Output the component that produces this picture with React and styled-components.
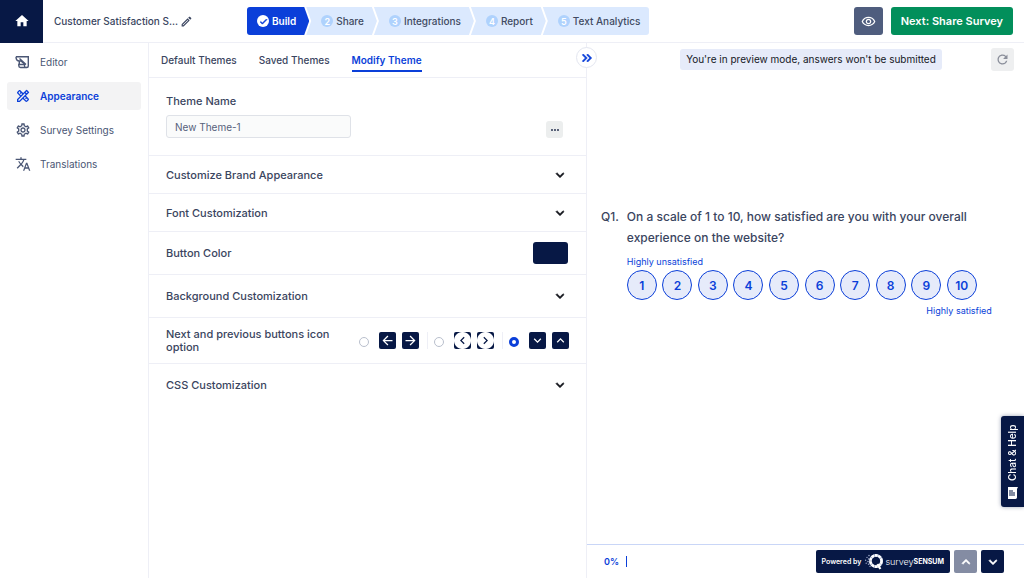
import React, { useState } from 'react'
import styled, { createGlobalStyle } from 'styled-components';
import {
    MdHome,
    MdOutlineEdit,
    MdOutlineDesignServices,
    MdOutlineSettings,
    MdTranslate,
    MdOutlineRemoveRedEye,
    MdRefresh,
    MdMoreHoriz,
    MdKeyboardArrowDown,
    MdKeyboardArrowUp,
    MdKeyboardArrowLeft,
    MdKeyboardArrowRight,
    MdArrowBack,
    MdArrowForward,
    MdKeyboardDoubleArrowRight,
    MdCheck,
} from 'react-icons/md';

const navy = '#071845';
const blue = '#0b3fd9';
const ink = '#3a4560';
const line = '#eeeff6';

const GlobalStyle = createGlobalStyle`
    * {
        box-sizing: border-box;
    }
    body {
        margin: 0;
        background: white;
        color: ${ink};
        font-family: Inter, "Liberation Sans", sans-serif;
        font-size: 10px;
    }
    button, input {
        font-family: inherit;
    }
    a {
        color: inherit;
        text-decoration: none;
    }
    svg {
        flex-shrink: 0;
    }
    path[fill="none"] {
        stroke: none;
    }
`;

const Page = styled.div`
    display: flex;
    flex-direction: column;
    min-height: 100vh;
`;

const Header = styled.header`
    display: flex;
    align-items: center;
    height: 43px;
    padding-right: 11px;
    border-bottom: 1px solid ${line};
`;

const HomeLink = styled.a`
    display: flex;
    align-items: center;
    justify-content: center;
    width: 43px;
    height: 43px;
    background: ${navy};
    color: white;
    font-size: 16px;
`;

const SurveyTitle = styled.div`
    display: flex;
    align-items: center;
    gap: 2px;
    width: 204px;
    padding-left: 11px;
    font-weight: 500;
    white-space: nowrap;
`;

const PlainButton = styled.button`
    display: flex;
    padding: 0;
    border: 0;
    background: transparent;
    color: ${ink};
    font-size: 13px;
    cursor: pointer;
`;

const Steps = styled.nav`
    display: flex;
    border-radius: 3px;
    overflow: hidden;
`;

const Step = styled.a`
    display: flex;
    align-items: center;
    gap: 3px;
    height: 28px;
    padding: 0 13px 0 ${props => props.$first ? '10px' : '15px'};
    margin-left: ${props => props.$first ? '0' : '-3px'};
    background: ${props => props.$first ? blue : '#dbe9fe'};
    color: ${props => props.$first ? 'white' : '#414b62'};
    font-weight: ${props => props.$first ? 600 : 500};
    clip-path: ${props => props.$first
        ? 'polygon(0 0, calc(100% - 5px) 0, 100% 50%, calc(100% - 5px) 100%, 0 100%)'
        : 'polygon(0 0, calc(100% - 5px) 0, 100% 50%, calc(100% - 5px) 100%, 0 100%, 5px 50%)'};
    &:last-child {
        padding-right: 9px;
        clip-path: polygon(0 0, 100% 0, 100% 100%, 0 100%, 5px 50%);
    }
`;

const StepNumber = styled.span`
    display: flex;
    align-items: center;
    justify-content: center;
    width: 12px;
    height: 12px;
    border-radius: 50%;
    background: ${props => props.$done ? 'white' : '#afd2fd'};
    color: ${props => props.$done ? blue : 'white'};
    font-size: 9px;
    font-weight: 600;
    svg {
        stroke: currentColor;
        stroke-width: 2px;
    }
`;

const Actions = styled.div`
    display: flex;
    gap: 8px;
    margin-left: auto;
`;

const ActionButton = styled.button`
    display: flex;
    align-items: center;
    justify-content: center;
    height: 28px;
    padding: 0 ${props => props.$icon ? '7px' : '10px'};
    border: 0;
    border-radius: 3px;
    background: ${props => props.$icon ? '#4f5d7e' : '#028f5b'};
    color: white;
    font-size: ${props => props.$icon ? '15px' : '11px'};
    font-weight: 600;
    white-space: nowrap;
    cursor: pointer;
`;

const Body = styled.div`
    display: flex;
    flex: 1;
`;

const Sidebar = styled.nav`
    display: flex;
    flex-direction: column;
    gap: 6px;
    flex: 0 0 149px;
    padding: 5px 7px;
    border-right: 1px solid ${line};
`;

const SidebarLink = styled.a`
    display: flex;
    align-items: center;
    gap: 9px;
    height: 28px;
    padding-left: 8px;
    border-radius: 3px;
    background: ${props => props.$active ? '#f3f3f4' : 'transparent'};
    color: ${props => props.$active ? blue : '#4a5674'};
    font-weight: ${props => props.$active ? 600 : 400};
    svg {
        font-size: 16px;
    }
`;

const Editor = styled.main`
    position: relative;
    flex: 0 0 438px;
    border-right: 1px solid ${line};
`;

const Tabs = styled.div`
    display: flex;
    align-items: flex-end;
    gap: 22px;
    height: 35px;
    padding: 0 0 5px 12px;
    border-bottom: 1px solid ${line};
`;

const Tab = styled.button`
    padding: 0 0 4px;
    border: 0;
    border-bottom: 2px solid ${props => props.$active ? blue : 'transparent'};
    background: transparent;
    color: ${props => props.$active ? blue : ink};
    font-size: 10px;
    font-weight: ${props => props.$active ? 600 : 500};
    cursor: pointer;
`;

const CollapseButton = styled.button`
    position: absolute;
    top: 4px;
    right: -11px;
    display: flex;
    align-items: center;
    justify-content: center;
    width: 21px;
    height: 21px;
    padding: 0;
    border: 1px solid #e3e6f0;
    border-radius: 50%;
    background: white;
    color: ${blue};
    font-size: 16px;
    cursor: pointer;
    svg {
        stroke: currentColor;
        stroke-width: 1px;
    }
`;

const ThemeRow = styled.div`
    display: flex;
    align-items: flex-end;
    justify-content: space-between;
    height: 78px;
    padding: 0 23px 17px 17px;
    border-bottom: 1px solid ${line};
`;

const Field = styled.label`
    display: flex;
    flex-direction: column;
    gap: 7px;
    font-size: 11px;
    font-weight: 500;
`;

const TextInput = styled.input`
    width: 185px;
    height: 23px;
    padding: 0 8px;
    border: 1px solid #dfe2e8;
    border-radius: 3px;
    background: #fafbfb;
    color: #56617b;
    font-size: 10px;
`;

const MoreButton = styled.button`
    display: flex;
    align-items: center;
    justify-content: center;
    width: 17px;
    height: 17px;
    padding: 0;
    border: 0;
    border-radius: 3px;
    background: #eceeee;
    color: ${ink};
    font-size: 12px;
`;

const Section = styled.div`
    display: flex;
    align-items: center;
    justify-content: space-between;
    height: ${props => props.$tall ? '43px' : '38px'};
    padding: 0 18px 0 17px;
    border-bottom: 1px solid ${props => props.$last ? 'transparent' : line};
    font-size: 11px;
    font-weight: 500;
`;

const SectionToggle = styled(Section).attrs({ as: 'button' })`
    width: 100%;
    border-width: 0 0 1px;
    background: transparent;
    color: ${ink};
    cursor: pointer;
    svg {
        color: #14161c;
        font-size: 16px;
        stroke: currentColor;
        stroke-width: 1px;
    }
`;

const Swatch = styled.input`
    appearance: none;
    width: 35px;
    height: 22px;
    padding: 0;
    border: 0;
    border-radius: 3px;
    overflow: hidden;
    background: ${navy};
    &::-webkit-color-swatch-wrapper {
        padding: 0;
    }
    &::-webkit-color-swatch {
        border: 0;
    }
`;

const IconSection = styled.fieldset`
    display: flex;
    align-items: center;
    justify-content: space-between;
    height: 46px;
    margin: 0;
    padding: 0 17px;
    border: 0;
    border-bottom: 1px solid ${line};
`;

const IconSectionTitle = styled.span`
    width: 172px;
    font-size: 11px;
    font-weight: 500;
    line-height: 13px;
`;

const IconOptions = styled.div`
    display: flex;
    align-items: center;
`;

const IconOption = styled.label`
    display: flex;
    align-items: center;
    gap: 6px;
    & + & {
        margin-left: 8px;
        padding-left: 6px;
        border-left: 1px solid ${line};
    }
`;

const Radio = styled.input`
    appearance: none;
    width: 10px;
    height: 10px;
    margin: 2px 4px 0 0;
    border: 1px solid #b9bfcd;
    border-radius: 50%;
    background: white;
    &:checked {
        border: 3px solid ${blue};
    }
`;

const IconTile = styled.span`
    display: flex;
    align-items: center;
    justify-content: center;
    width: 17px;
    height: 17px;
    border-radius: 2px;
    background: ${props => props.$round ? `radial-gradient(circle, white 8px, ${navy} 9px)` : navy};
    color: ${props => props.$round ? navy : 'white'};
    font-size: 15px;
`;

const Preview = styled.section`
    display: flex;
    flex-direction: column;
    flex: 1;
    min-width: 0;
`;

const PreviewBar = styled.div`
    display: flex;
    align-items: center;
    padding: 5px 10px 0 44px;
`;

const PreviewNotice = styled.p`
    margin: 0 auto;
    padding: 0 6px;
    border-radius: 3px;
    background: #e6ebf9;
    color: #15181f;
    font-size: 10px;
    line-height: 21px;
`;

const RefreshButton = styled.button`
    display: flex;
    align-items: center;
    justify-content: center;
    width: 23px;
    height: 23px;
    padding: 0;
    border: 0;
    border-radius: 3px;
    background: #eeeff0;
    color: #8b8f9b;
    font-size: 15px;
`;

const Question = styled.div`
    display: flex;
    flex: 1;
    gap: 8px;
    padding: 135px 14px 0;
    font-size: 12px;
    font-weight: 500;
    line-height: 21px;
`;

const QuestionText = styled.h1`
    margin: 0;
    font-size: 12px;
    font-weight: 500;
    line-height: 21px;
`;

const Answer = styled.div`
    width: 365px;
`;

const ScaleLabel = styled.div`
    color: ${blue};
    font-size: 9px;
    font-weight: 400;
    line-height: 11px;
    margin-top: ${props => props.$end ? '5px' : '8px'};
    text-align: ${props => props.$end ? 'right' : 'left'};
`;

const Scale = styled.div`
    display: flex;
    justify-content: space-between;
    padding: 3px 15px 0 0;
`;

const ScaleButton = styled.button`
    width: 30px;
    height: 30px;
    padding: 0;
    border: 1px solid ${blue};
    border-radius: 50%;
    background: #e6ebfa;
    color: ${blue};
    font-size: 12px;
    font-weight: 600;
    cursor: pointer;
`;

const PreviewFooter = styled.footer`
    display: flex;
    align-items: center;
    gap: 4px;
    height: 34px;
    padding: 0 20px 0 17px;
    border-top: 1px solid #c9d6f7;
`;

const Progress = styled.div`
    margin-right: auto;
    padding-right: 7px;
    border-right: 1px solid ${blue};
    color: ${blue};
    font-size: 9px;
    font-weight: 600;
    line-height: 11px;
`;

const PoweredBy = styled.a`
    display: flex;
    align-items: center;
    height: 23px;
    padding: 0 6px;
    border-radius: 2px;
    background: ${navy};
    color: white;
    font-size: 7px;
    font-weight: 600;
    svg {
        margin: 0 1px 0 3px;
    }
`;

const Brand = styled.span`
    font-size: ${props => props.$light ? '9px' : '7px'};
    font-weight: ${props => props.$light ? 300 : 700};
`;

const PageButton = styled.button`
    display: flex;
    align-items: center;
    justify-content: center;
    width: 23px;
    height: 23px;
    padding: 0;
    border: 0;
    border-radius: 2px;
    background: ${props => props.disabled ? '#848ca3' : navy};
    color: white;
    font-size: 16px;
    svg {
        stroke: currentColor;
        stroke-width: 1px;
    }
`;

const ChatTab = styled.button`
    position: fixed;
    right: 0;
    top: 416px;
    display: flex;
    align-items: center;
    justify-content: center;
    gap: 6px;
    width: 23px;
    height: 91px;
    padding: 0;
    border: 0;
    border-radius: 0 3px 3px 0;
    background: ${navy};
    box-shadow: 0 0 4px rgba(7, 24, 69, 0.4);
    color: white;
    font-size: 10px;
    font-weight: 500;
    writing-mode: vertical-rl;
    transform: rotate(180deg);
    cursor: pointer;
`;

function EditorIcon() {
    return (
        <svg width="16" height="16" viewBox="0 0 16 16" fill="none" stroke="currentColor" strokeWidth="1.4" aria-hidden="true">
            <path d="M1 2.700h12.300v9.300a1.500 1.500 0 0 1-1.500 1.500H5.500A1.700 1.700 0 0 1 3.800 11.800v-1.300h5.700v1.500a1.500 1.500 0 0 0 2.300 1.200" />
            <path d="M1 2.700c0 2.800 1.200 4.300 3.500 4.300l1.200-.2 4.600 4M4.500 4.500l6.500 6" />
            <path d="M4.300 7v3.500" />
        </svg>
    )
}

function BrandMark() {
    return (
        <svg width="20" height="18" viewBox="0 0 20 18" fill="none" aria-hidden="true">
            <circle cx="12" cy="8" r="5.6" stroke="#8f9bbd" strokeWidth="2.8" />
            <circle cx="12" cy="8" r="5.6" stroke="white" strokeWidth="2.6" strokeDasharray="2.9 0.6" />
            <path d="M13.4 11.2l3 4.8" stroke="white" strokeWidth="2.2" />
            <g fill="#9aa5c4">
                <circle cx="5" cy="2.6" r="0.8" />
                <circle cx="3" cy="4.4" r="0.7" />
                <circle cx="4.6" cy="6" r="0.8" />
                <circle cx="1.6" cy="7.2" r="0.7" />
                <circle cx="4" cy="8.6" r="0.8" />
                <circle cx="2.2" cy="10.2" r="0.7" />
                <circle cx="4.6" cy="11.2" r="0.8" />
                <circle cx="6" cy="13.4" r="0.7" />
            </g>
        </svg>
    )
}

// drawn upside down, the tab that holds it is turned by 180deg
function ChatIcon() {
    return (
        <svg width="11" height="12" viewBox="0 0 11 12" aria-hidden="true">
            <path d="M0 12l1-2V1.500A1.500 1.500 0 0 1 2.500 0H10v12z" fill="white" />
            <path d="M8 3v6M6 3v6M4 3v4" stroke={navy} />
        </svg>
    )
}

const steps = ['Build', 'Share', 'Integrations', 'Report', 'Text Analytics'];

const sidebarLinks = [
    { label: 'Editor', Icon: EditorIcon },
    { label: 'Appearance', Icon: MdOutlineDesignServices },
    { label: 'Survey Settings', Icon: MdOutlineSettings },
    { label: 'Translations', Icon: MdTranslate },
];

const tabs = ['Default Themes', 'Saved Themes', 'Modify Theme'];

const iconOptions = [
    { id: 'arrows', label: 'Arrows', Prev: MdArrowBack, Next: MdArrowForward },
    { id: 'round', label: 'Round chevrons', Prev: MdKeyboardArrowLeft, Next: MdKeyboardArrowRight, round: true },
    { id: 'vertical', label: 'Vertical chevrons', Prev: MdKeyboardArrowDown, Next: MdKeyboardArrowUp },
];

const scores = [1, 2, 3, 4, 5, 6, 7, 8, 9, 10];

function App() {
    const [tab, setTab] = useState('Modify Theme');
    const [themeName, setThemeName] = useState('New Theme-1');
    const [buttonColor, setButtonColor] = useState(navy);
    const [iconStyle, setIconStyle] = useState('vertical');

    return (
        <Page>
            <GlobalStyle />
            <Header>
                <HomeLink href="#home" aria-label="Home"><MdHome /></HomeLink>
                <SurveyTitle>
                    Customer Satisfaction S...
                    <PlainButton aria-label="Rename survey"><MdOutlineEdit /></PlainButton>
                </SurveyTitle>
                <Steps>
                    {steps.map((step, i) => (
                        <Step key={step} href="#step" $first={i === 0}>
                            <StepNumber $done={i === 0}>{i === 0 ? <MdCheck /> : i + 1}</StepNumber>
                            {step}
                        </Step>
                    ))}
                </Steps>
                <Actions>
                    <ActionButton $icon aria-label="Preview"><MdOutlineRemoveRedEye /></ActionButton>
                    <ActionButton>Next: Share Survey</ActionButton>
                </Actions>
            </Header>
            <Body>
                <Sidebar>
                    {sidebarLinks.map(({ label, Icon }) => (
                        <SidebarLink key={label} href="#section" $active={label === 'Appearance'}>
                            <Icon />
                            {label}
                        </SidebarLink>
                    ))}
                </Sidebar>
                <Editor>
                    <Tabs>
                        {tabs.map(name => (
                            <Tab key={name} $active={name === tab} onClick={() => setTab(name)}>{name}</Tab>
                        ))}
                    </Tabs>
                    <CollapseButton aria-label="Collapse"><MdKeyboardDoubleArrowRight /></CollapseButton>
                    <ThemeRow>
                        <Field>
                            Theme Name
                            <TextInput value={themeName} onChange={e => setThemeName(e.target.value)} />
                        </Field>
                        <MoreButton aria-label="More"><MdMoreHoriz /></MoreButton>
                    </ThemeRow>
                    <SectionToggle>Customize Brand Appearance<MdKeyboardArrowDown /></SectionToggle>
                    <SectionToggle>Font Customization<MdKeyboardArrowDown /></SectionToggle>
                    <Section as="label" $tall>
                        Button Color
                        <Swatch type="color" value={buttonColor} onChange={e => setButtonColor(e.target.value)} />
                    </Section>
                    <SectionToggle $tall>Background Customization<MdKeyboardArrowDown /></SectionToggle>
                    <IconSection aria-labelledby="icon-title">
                        <IconSectionTitle id="icon-title">Next and previous buttons icon option</IconSectionTitle>
                        <IconOptions>
                            {iconOptions.map(({ id, label, Prev, Next, round }) => (
                                <IconOption key={id}>
                                    <Radio
                                        type="radio"
                                        name="icon-style"
                                        aria-label={label}
                                        checked={iconStyle === id}
                                        onChange={() => setIconStyle(id)}
                                    />
                                    <IconTile $round={round}><Prev /></IconTile>
                                    <IconTile $round={round}><Next /></IconTile>
                                </IconOption>
                            ))}
                        </IconOptions>
                    </IconSection>
                    <SectionToggle $tall $last>CSS Customization<MdKeyboardArrowDown /></SectionToggle>
                </Editor>
                <Preview>
                    <PreviewBar>
                        <PreviewNotice>You're in preview mode, answers won't be submitted</PreviewNotice>
                        <RefreshButton aria-label="Restart"><MdRefresh /></RefreshButton>
                    </PreviewBar>
                    <Question>
                        <span>Q1.</span>
                        <Answer>
                            <QuestionText>
                                On a scale of 1 to 10, how satisfied are you with your overall experience on the website?
                            </QuestionText>
                            <ScaleLabel>Highly unsatisfied</ScaleLabel>
                            <Scale>
                                {scores.map(score => <ScaleButton key={score}>{score}</ScaleButton>)}
                            </Scale>
                            <ScaleLabel $end>Highly satisfied</ScaleLabel>
                        </Answer>
                    </Question>
                    <PreviewFooter>
                        <Progress>0%</Progress>
                        <PoweredBy href="#powered">
                            Powered by
                            <BrandMark />
                            <Brand $light>survey</Brand>
                            <Brand>SENSUM</Brand>
                        </PoweredBy>
                        <PageButton disabled aria-label="Previous"><MdKeyboardArrowUp /></PageButton>
                        <PageButton aria-label="Next"><MdKeyboardArrowDown /></PageButton>
                    </PreviewFooter>
                </Preview>
            </Body>
            <ChatTab><ChatIcon />Chat &amp; Help</ChatTab>
        </Page>
    )
}


export default App
